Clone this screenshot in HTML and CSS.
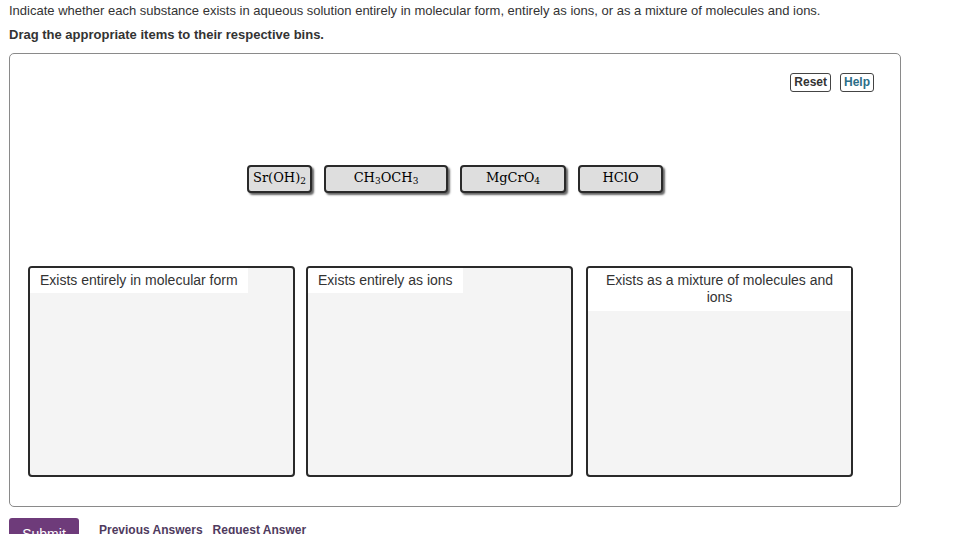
FILE: index.html
```html
<!DOCTYPE html>
<html>
<head>
<meta charset="utf-8">
<link rel="stylesheet" href="styles.css">
</head>
<body>
<p class="q">Indicate whether each substance exists in aqueous solution entirely in molecular form, entirely as ions, or as a mixture of molecules and ions.</p>
<p class="instr">Drag the appropriate items to their respective bins.</p>
<div class="panel">
  <div class="tools">
    <button class="tbtn">Reset</button>
    <button class="tbtn help">Help</button>
  </div>
  <div class="items">
    <div class="item w1">Sr(OH)<sub>2</sub></div>
    <div class="item w2">CH<sub>3</sub>OCH<sub>3</sub></div>
    <div class="item w3">MgCrO<sub>4</sub></div>
    <div class="item w4">HClO</div>
  </div>
  <div class="bins">
    <div class="bin"><div class="label">Exists entirely in molecular form</div></div>
    <div class="bin"><div class="label">Exists entirely as ions</div></div>
    <div class="bin b3"><div class="label">Exists as a mixture of molecules and ions</div></div>
  </div>
</div>
<div class="actions">
  <button class="submit">Submit</button>
  <a class="link">Previous Answers</a>
  <a class="link">Request Answer</a>
</div>
</body>
</html>
```
FILE: styles.css
```css
html, body { margin: 0; padding: 0; background: #fff; }
body { font-family: "Liberation Sans", Arial, sans-serif; color: #333; overflow: hidden; height: 534px; }
.q { margin: 0; padding: 3px 0 0 9px; font-size: 13px; line-height: 15px; color: #333; }
.instr { margin: 9px 0 0 9px; font-size: 13px; line-height: 15px; font-weight: bold; color: #333; }
.panel {
  margin: 11px 0 0 9px;
  width: 890px;
  height: 452px;
  border: 1px solid #8a8a8a;
  border-radius: 5px;
  box-sizing: content-box;
  position: relative;
}
.tools { display: flex; justify-content: flex-end; gap: 9px; padding: 19px 26px 0 0; height: 19px; }
.tbtn {
  font-family: "Liberation Sans", Arial, sans-serif;
  font-size: 12px; font-weight: bold; color: #333;
  background: #fff; border: 1px solid #444; border-radius: 3px;
  padding: 0 3px; height: 19px; line-height: 17px; margin: 0;
}
.tbtn.help { color: #2b6d87; }
.items { display: flex; justify-content: center; gap: 12px; margin-top: 73px; }
.item {
  box-sizing: border-box;
  height: 28px;
  background: #dedede;
  border: 2px solid #2a2a2a;
  border-radius: 4px;
  box-shadow: 2px 2px 2px #666;
  font-family: "DejaVu Serif", "Liberation Serif", serif;
  font-size: 13px;
  color: #000;
  display: flex; align-items: center; justify-content: center;
  padding-bottom: 3px;
}
.item sub { font-size: 9px; position: relative; top: 3px; vertical-align: baseline; line-height: 0; }
.w1 { width: 65px; }
.w2 { width: 124px; }
.w3 { width: 106px; }
.w4 { width: 85px; }
.bins { display: flex; gap: 11px; margin: 73px 0 0 18px; }
.bin {
  box-sizing: border-box;
  width: 267px; height: 211px;
  border: 2px solid #2a2a2a;
  border-radius: 4px;
  background: #f4f4f4;
}
.bin.b3 { margin-left: 2px; }
.label {
  display: inline-block;
  background: #fff;
  font-size: 14px; line-height: 17px; color: #333;
  padding: 4px 10px 4px 10px;
  text-align: center;
  border-top-left-radius: 2px;
}
.b3 .label { display: block; padding: 4px 16px 5px; }
.actions { display: flex; align-items: flex-start; margin: 11px 0 0 9px; }
.submit {
  font-family: "Liberation Sans", Arial, sans-serif;
  font-size: 14px; color: #fff;
  background: #6e3b7a; border: none; border-radius: 3px 3px 0 0;
  width: 70px; height: 30px; padding: 1px 0 0; margin: 0;
  text-align: center; vertical-align: top;
  display: block; line-height: 16px;
}
.link { font-size: 12px; font-weight: bold; color: #4f3b5e; margin-top: 5px; line-height: 14px; }
.link:first-of-type { margin-left: 20px; }
.link + .link { margin-left: 10px; }
```
